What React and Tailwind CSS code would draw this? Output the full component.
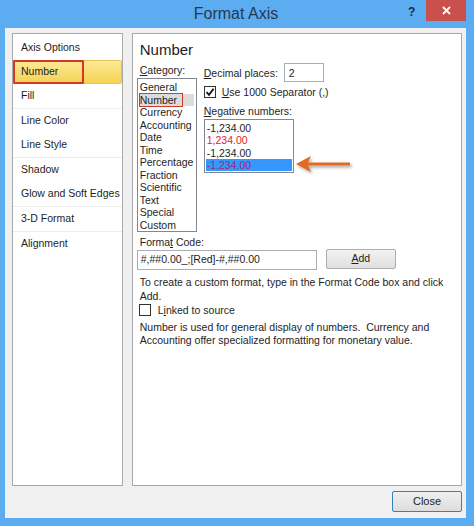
import React from "react";

const font = { fontFamily: '"Liberation Sans", Arial, sans-serif' };

const sideItems = [
  { label: "Axis Options" },
  { label: "Number", active: true },
  { label: "Fill", sep: true },
  { label: "Line Color" },
  { label: "Line Style", sep: true },
  { label: "Shadow" },
  { label: "Glow and Soft Edges", sep: true },
  { label: "3-D Format", sep: true },
  { label: "Alignment" },
];

const categories = [
  "General",
  "Number",
  "Currency",
  "Accounting",
  "Date",
  "Time",
  "Percentage",
  "Fraction",
  "Scientific",
  "Text",
  "Special",
  "Custom",
];

function Check({ checked }) {
  return (
    <span className="w-[12px] h-[12px] border border-[#333] bg-white flex items-center justify-center shrink-0">
      {checked && (
        <svg width="10" height="10" viewBox="0 0 10 10">
          <path d="M1.5 5.2 L4 7.8 L8.6 1.8" fill="none" stroke="#111" strokeWidth="1.8" />
        </svg>
      )}
    </span>
  );
}

export default function App() {
  return (
    <div
      className="w-[474px] h-[526px] bg-[#5cacf2] flex flex-col text-[#1e1e1e] overflow-hidden"
      style={font}
    >
      {/* title bar */}
      <div className="h-[28px] relative flex items-center justify-center">
        <span className="text-[16px] text-[#26384f] pr-[2px]">Format Axis</span>
        <span className="absolute left-[408px] top-[3px] text-[12px] font-bold text-[#1d2a3a]">?</span>
        <div className="absolute left-[426px] top-0 w-[40px] h-[21px] bg-[#c9504c] flex items-center justify-center">
          <svg width="9" height="9" viewBox="0 0 9 9">
            <path d="M1 1 L8 8 M8 1 L1 8" stroke="#fff" strokeWidth="1.8" />
          </svg>
        </div>
      </div>

      {/* body */}
      <div className="ml-[5px] mr-[8px] h-[490px] bg-[#f0f0f0] pt-[5px] pl-[7px] pr-[4px] flex flex-col">
        <div className="flex gap-[9px] h-[453px]">
          {/* left nav */}
          <div className="w-[111px] h-full bg-white border border-[#a9a9a9] pt-[2px] text-[10.5px]">
            {sideItems.map((it) => (
              <div key={it.label} className={it.sep ? "border-b border-[#ececec]" : ""}>
                {it.active ? (
                  <div className="relative h-[24px] rounded-[2px] border border-[#e5c35a] bg-gradient-to-b from-[#fde995] to-[#f5d250] flex items-center pl-[7px]">
                    Number
                    <span className="absolute left-[-1px] top-[-1px] w-[71px] h-[24px] border-2 border-[#cf3b25] rounded-[1px]" />
                  </div>
                ) : (
                  <div className="h-[24px] flex items-center pl-[8px] whitespace-nowrap">{it.label}</div>
                )}
              </div>
            ))}
          </div>

          {/* right panel */}
          <div className="w-[331px] h-full bg-white border border-[#a9a9a9] pt-[7px] pl-[4px] text-[10.5px] relative">
            <div className="text-[15px] leading-[18px] pl-[3px]">Number</div>

            <div className="flex mt-[5px]">
              <div className="w-[67px]">
                <div className="leading-[12px] pl-[3px]">
                  <span className="underline">C</span>ategory:
                </div>
                <div className="mt-[2px] w-[60px] h-[154px] border border-[#828790] bg-white pt-[2px] pl-[1px]">
                  {categories.map((c) =>
                    c === "Number" ? (
                      <div key={c} className="relative leading-[12.5px] bg-[#dcdcdc] w-[55px] pl-[1px]">
                        {c}
                        <span className="absolute left-0 top-[-1px] w-[44px] h-[14px] border border-[#cf3b25]" />
                      </div>
                    ) : (
                      <div key={c} className="leading-[12.5px] pl-[1px]">
                        {c}
                      </div>
                    )
                  )}
                </div>
              </div>

              <div className="flex flex-col">
                <div className="flex items-center mt-[-1px] leading-[12px]">
                  <span className="w-[80px]">
                    <span className="underline">D</span>ecimal places:
                  </span>
                  <div className="w-[40px] h-[19px] border border-[#abadb3] bg-white flex items-center pl-[4px]">2</div>
                </div>
                <div className="flex items-center gap-[6px] mt-[4px] leading-[12px]">
                  <Check checked />
                  <span>
                    <span className="underline">U</span>se 1000 Separator (,)
                  </span>
                </div>
                <div className="mt-[7px] leading-[12px]">
                  <span className="underline">N</span>egative numbers:
                </div>
                <div className="mt-[2px] w-[90px] h-[54px] border border-[#828790] bg-white pt-[2px] pl-[1px] pr-[1px]">
                  <div className="leading-[12.3px] pl-[1px]">-1,234.00</div>
                  <div className="leading-[12.3px] pl-[1px] text-[#e8202a]">1,234.00</div>
                  <div className="leading-[12.3px] pl-[1px]">-1,234.00</div>
                  <div className="leading-[12.3px] pl-[1px] bg-[#3399ff] text-[#9b2a7a]">-1,234.00</div>
                </div>
              </div>
            </div>

            {/* orange arrow annotation */}
            <svg
              className="absolute left-[161px] top-[119px]"
              width="60"
              height="26"
              viewBox="0 0 60 26"
            >
              <defs>
                <filter id="sh" x="-20%" y="-40%" width="150%" height="200%">
                  <feDropShadow dx="1.5" dy="2" stdDeviation="1.5" floodColor="#000" floodOpacity="0.35" />
                </filter>
              </defs>
              <path
                d="M2 11 L17 3 L14 9.5 L56 9.5 L56 12.5 L14 12.5 L17 19 Z"
                fill="#e06a22"
                filter="url(#sh)"
              />
            </svg>

            <div className="mt-[4px] leading-[12px] pl-[3px]">
              Forma<span className="underline">t</span> Code:
            </div>
            <div className="flex items-center mt-[2px]">
              <div className="w-[180px] h-[20px] border border-[#abadb3] bg-white flex items-center pl-[3px]">
                #,##0.00_;[Red]-#,##0.00
              </div>
              <div className="ml-[9px] w-[70px] h-[20px] border border-[#acacac] rounded-[2px] bg-gradient-to-b from-[#f2f2f2] to-[#e0e0e0] flex items-center justify-center mt-[-2px]">
                <span className="underline">A</span>dd
              </div>
            </div>
            <div className="mt-[5px] leading-[14px] pl-[3px] whitespace-nowrap">
              To create a custom format, type in the Format Code box and click
              <br />
              Add.
            </div>
            <div className="flex items-center gap-[7px] mt-[1px] pl-[2px] leading-[12px]">
              <Check />
              <span>
                L<span className="underline">i</span>nked to source
              </span>
            </div>
            <div className="mt-[5px] leading-[13px] pl-[3px] whitespace-nowrap">
              Number is used for general display of numbers.&nbsp; Currency and
              <br />
              Accounting offer specialized formatting for monetary value.
            </div>
          </div>
        </div>

        <div className="flex justify-end mt-[5px]">
          <div className="w-[70px] h-[21px] border border-[#3c7fb1] rounded-[2px] bg-gradient-to-b from-[#f0f0f0] to-[#dddddd] flex items-center justify-center text-[11px]">
            Close
          </div>
        </div>
      </div>
    </div>
  );
}
